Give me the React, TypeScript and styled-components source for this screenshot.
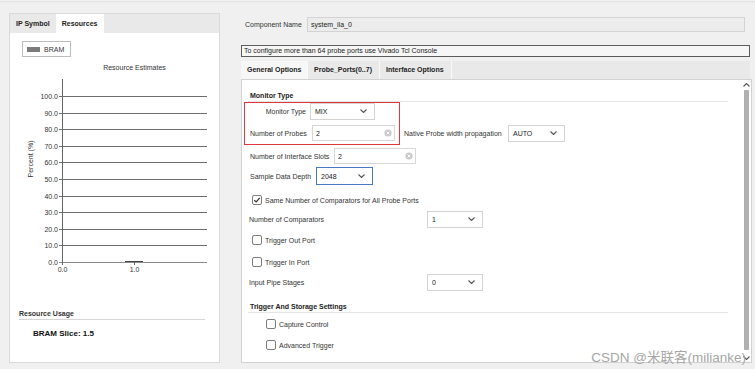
import React from 'react';
import styled, { createGlobalStyle } from 'styled-components';

const GlobalStyle = createGlobalStyle`
  html, body { margin: 0; padding: 0; background: #f0f0f0; }
  body { font-family: "Liberation Sans", Arial, sans-serif; font-size: 7px; color: #222; }
  * { box-sizing: border-box; }
`;

const Page = styled.div`
  position: relative;
  width: 755px;
  height: 368px;
  margin-top: 1px;
  border-top: 1px solid #e3e3e3;
  background: #f0f0f0;
  overflow: hidden;
  display: flex;
  align-items: flex-start;
  padding: 11px 0 0 9px;
  gap: 20px;
`;

/* ---------- left panel ---------- */
const LeftPanel = styled.div`
  width: 211px;
  height: 350px;
  background: #fff;
  border: 1px solid #d9d9d9;
  display: flex;
  flex-direction: column;
`;

const TabBar = styled.div<{ $w?: number }>`
  display: flex;
  height: 19px;
  flex-shrink: 0;
  background: #e9e9e9;
  ${(p) => (p.$w ? `width: ${p.$w}px;` : '')}
`;

const Tab = styled.div<{ $active?: boolean; $w?: number; $bg?: string }>`
  height: 100%;
  line-height: 19px;
  padding: 0 6px;
  font-weight: bold;
  color: #222;
  white-space: nowrap;
  background: ${(p) => (p.$active ? p.$bg || '#fff' : 'transparent')};
  ${(p) => (p.$w ? `width: ${p.$w}px;` : '')}
`;

const RightTab = styled(Tab)`
  line-height: 18px;
  border-right: 1px solid #f9f9f9;
`;

const Legend = styled.div`
  margin: 8px 0 0 12px;
  width: 49px;
  height: 16px;
  border: 1px solid #bcbcbc;
  display: flex;
  align-items: center;
  gap: 4px;
  padding-left: 4px;
  color: #333;
  flex-shrink: 0;
`;

const Swatch = styled.span`
  width: 13px;
  height: 5px;
  background: #7b7b7b;
`;

const ChartSvg = styled.svg`
  display: block;
  margin-top: 2px;
  flex-shrink: 0;
`;

const Usage = styled.div`
  margin-top: auto;
  padding: 0 0 23px 9px;
`;

const UsageTitle = styled.div`
  width: 186px;
  font-weight: bold;
  line-height: 9px;
  padding-bottom: 1px;
  border-bottom: 1px solid #d6d6d6;
  color: #333;
`;

const UsageValue = styled.div`
  margin: 9px 0 0 14px;
  font-size: 8px;
  line-height: 10px;
  font-weight: bold;
  color: #111;
`;

/* ---------- right column ---------- */
const RightCol = styled.div`
  width: 512px;
  height: 350px;
  display: flex;
  flex-direction: column;
`;

const NameRow = styled.div`
  margin-top: 4px;
  height: 15px;
  display: flex;
  align-items: center;
  padding-left: 5px;
  flex-shrink: 0;
`;

const NameInput = styled.div`
  width: 438px;
  height: 15px;
  background: #ececec;
  border: 1px solid #d3d3d3;
  padding-left: 3px;
  line-height: 13px;
`;

const InfoBar = styled.div`
  margin: 13px 0 0 1px;
  width: 509px;
  height: 12px;
  border: 1px solid #5c5c5c;
  background: #f6f6f6;
  padding-left: 2px;
  line-height: 10px;
  flex-shrink: 0;
`;

const RightTabs = styled(TabBar)`
  margin: 4px 0 0 1px;
  height: 18px;
`;

const Content = styled.div`
  margin-left: 1px;
  width: 511px;
  flex: 1;
  background: #fff;
  border: 1px solid #d2d2d2;
  display: flex;
`;

const Form = styled.div`
  position: relative;
  flex: 1;
  display: flex;
  flex-direction: column;
`;

const SectionHeading = styled.div`
  height: 22px;
  margin: 0 14px 0 6px;
  padding: 11px 0 0 2px;
  line-height: 9px;
  font-weight: bold;
  color: #222;
  border-bottom: 1px solid #e5e5e5;
  flex-shrink: 0;
`;

const Row = styled.div<{ $mt?: number; $pl?: number }>`
  height: 18px;
  margin-top: ${(p) => p.$mt ?? 0}px;
  padding-left: ${(p) => p.$pl ?? 8}px;
  display: flex;
  align-items: center;
  flex-shrink: 0;
`;

const Label = styled.span<{ $w?: number; $right?: boolean; $ml?: number }>`
  flex-shrink: 0;
  white-space: nowrap;
  color: #333;
  ${(p) => (p.$w ? `width: ${p.$w}px;` : '')}
  ${(p) => (p.$ml ? `margin-left: ${p.$ml}px;` : '')}
  text-align: ${(p) => (p.$right ? 'right' : 'left')};
  padding-right: ${(p) => (p.$right ? 4 : 0)}px;
`;

const SelectBox = styled.div<{ $w: number; $h?: number; $focus?: boolean }>`
  width: ${(p) => p.$w}px;
  height: ${(p) => p.$h ?? 17}px;
  border: 1px solid ${(p) => (p.$focus ? '#4a76c9' : '#d3d3d3')};
  background: #fff;
  display: flex;
  align-items: center;
  justify-content: space-between;
  padding: 0 7px 0 4px;
  flex-shrink: 0;
  color: #222;
`;

const InputBox = styled.div<{ $w: number }>`
  width: ${(p) => p.$w}px;
  height: 16px;
  border: 1px solid #d6d6d6;
  background: #fff;
  display: flex;
  align-items: center;
  justify-content: space-between;
  padding: 0 2px 0 3px;
  flex-shrink: 0;
`;

const CheckRow = styled(Row)`
  gap: 3px;
`;

const Box = styled.span`
  width: 10px;
  height: 10px;
  border: 1px solid #7d7d7d;
  border-radius: 2px;
  background: #fff;
  display: flex;
  align-items: center;
  justify-content: center;
  flex-shrink: 0;
`;

const Annotation = styled.div`
  position: absolute;
  left: 2px;
  top: 22px;
  width: 156px;
  height: 43px;
  border: 1.5px solid #e3363b;
  pointer-events: none;
`;

const Scrollbar = styled.div`
  width: 9px;
  display: flex;
  flex-direction: column;
  align-items: center;
  padding: 3px 0 2px;
`;

const Thumb = styled.div`
  flex: 1;
  width: 5px;
  margin: 3px 0 6px;
  background: #b0b0b0;
  border-radius: 1px;
`;

const Watermark = styled.div`
  position: absolute;
  right: 9px;
  bottom: 3px;
  z-index: 2;
  font-family: "Liberation Sans", "Noto Sans CJK SC", sans-serif;
  font-size: 13.5px;
  line-height: 16px;
  color: #a6a6a6;
  white-space: nowrap;
`;

/* ---------- icons ---------- */
const Chevron = ({ up }: { up?: boolean }) => (
  <svg width="7" height="4" viewBox="0 0 7 4">
    <polyline
      points={up ? '0.5,3.5 3.5,0.5 6.5,3.5' : '0.5,0.5 3.5,3.5 6.5,0.5'}
      fill="none"
      stroke="#555"
      strokeWidth="1.1"
    />
  </svg>
);

const ClearIcon = () => (
  <svg width="8" height="8" viewBox="0 0 8 8">
    <circle cx="4" cy="4" r="3.6" fill="#c9c9c9" />
    <path d="M2.6 2.6 L5.4 5.4 M5.4 2.6 L2.6 5.4" stroke="#fff" strokeWidth="0.9" />
  </svg>
);

const Tick = () => (
  <svg width="8" height="8" viewBox="0 0 8 8">
    <polyline points="1.3,4.2 3.2,6 6.8,1.8" fill="none" stroke="#333" strokeWidth="1.2" />
  </svg>
);

const Select = ({ value, w, h, focus }: { value: string; w: number; h?: number; focus?: boolean }) => (
  <SelectBox $w={w} $h={h} $focus={focus}>
    <span>{value}</span>
    <Chevron />
  </SelectBox>
);

const TextInput = ({ value, w }: { value: string; w: number }) => (
  <InputBox $w={w}>
    <span>{value}</span>
    <ClearIcon />
  </InputBox>
);

const Check = ({ label, checked, mt, pl }: { label: string; checked?: boolean; mt?: number; pl?: number }) => (
  <CheckRow $mt={mt} $pl={pl}>
    <Box>{checked && <Tick />}</Box>
    <Label>{label}</Label>
  </CheckRow>
);

/* ---------- chart ---------- */
const ticks = [100, 90, 80, 70, 60, 50, 40, 30, 20, 10, 0];
const FONT = 'Liberation Sans, Arial, sans-serif';

const Chart = () => {
  const top = 37;
  const step = 16.6;
  return (
    <ChartSvg width="209" height="218" viewBox="0 0 209 218">
      <text x="124.5" y="10.5" textAnchor="middle" fontSize="7" fill="#333" fontFamily={FONT}>
        Resource Estimates
      </text>
      <line x1="52.5" y1="20" x2="52.5" y2="203" stroke="#666" strokeWidth="1" />
      {ticks.map((t, i) => {
        const y = Math.round(top + i * step) + 0.5;
        return (
          <g key={t}>
            <line x1="49" y1={y} x2="197" y2={y} stroke={t === 0 ? '#8a8a8a' : '#6e6e6e'} strokeWidth="1" />
            <text x="48" y={y + 2.5} textAnchor="end" fontSize="7" fill="#333" fontFamily={FONT}>
              {t.toFixed(1)}
            </text>
          </g>
        );
      })}
      <line x1="52.5" y1="203" x2="52.5" y2="206" stroke="#666" />
      <line x1="124.5" y1="203" x2="124.5" y2="206" stroke="#666" />
      <line x1="115" y1="202.5" x2="133" y2="202.5" stroke="#444" strokeWidth="1" />
      <text x="52.5" y="212.5" textAnchor="middle" fontSize="7" fill="#333" fontFamily={FONT}>
        0.0
      </text>
      <text x="124.5" y="212.5" textAnchor="middle" fontSize="7" fill="#333" fontFamily={FONT}>
        1.0
      </text>
      <text x="0" y="0" transform="translate(22.5 100) rotate(-90)" textAnchor="middle" fontSize="7" fill="#333" fontFamily={FONT}>
        Percent (%)
      </text>
    </ChartSvg>
  );
};

export default function App() {
  return (
    <>
      <GlobalStyle />
      <Page>
        <LeftPanel>
          <TabBar>
            <Tab>IP Symbol</Tab>
            <Tab $active>Resources</Tab>
          </TabBar>
          <Legend>
            <Swatch />
            <span>BRAM</span>
          </Legend>
          <Chart />
          <Usage>
            <UsageTitle>Resource Usage</UsageTitle>
            <UsageValue>BRAM Slice: 1.5</UsageValue>
          </Usage>
        </LeftPanel>

        <RightCol>
          <NameRow>
            <Label $w={62}>Component Name</Label>
            <NameInput>system_ila_0</NameInput>
          </NameRow>
          <InfoBar>To configure more than 64 probe ports use Vivado Tcl Console</InfoBar>
          <RightTabs $w={509}>
            <RightTab $active $bg="#f7f7f7" $w={67}>
              General Options
            </RightTab>
            <RightTab $w={72}>Probe_Ports(0..7)</RightTab>
            <RightTab $w={72}>Interface Options</RightTab>
          </RightTabs>
          <Content>
            <Form>
              <SectionHeading>Monitor Type</SectionHeading>
              <Row $mt={0}>
                <Label $w={60} $right>
                  Monitor Type
                </Label>
                <Select value="MIX" w={65} />
              </Row>
              <Row $mt={4}>
                <Label $w={62}>Number of Probes</Label>
                <TextInput value="2" w={83} />
                <Label $w={104} $ml={9}>
                  Native Probe width propagation
                </Label>
                <Select value="AUTO" w={57} />
              </Row>
              <Row $mt={5}>
                <Label $w={84}>Number of Interface Slots</Label>
                <TextInput value="2" w={82} />
              </Row>
              <Row $mt={2}>
                <Label $w={66}>Sample Data Depth</Label>
                <Select value="2048" w={57} h={18} focus />
              </Row>
              <Check mt={6} pl={10} checked label="Same Number of Comparators for All Probe Ports" />
              <Row $mt={1} $pl={7}>
                <Label $w={178}>Number of Comparators</Label>
                <Select value="1" w={56} />
              </Row>
              <Check mt={3} pl={10} label="Trigger Out Port" />
              <Check mt={4} pl={10} label="Trigger In Port" />
              <Row $mt={2} $pl={7}>
                <Label $w={178}>Input Pipe Stages</Label>
                <Select value="0" w={56} />
              </Row>
              <SectionHeading>Trigger And Storage Settings</SectionHeading>
              <Check mt={2} pl={24} label="Capture Control" />
              <Check mt={3} pl={24} label="Advanced Trigger" />
              <Annotation />
            </Form>
            <Scrollbar>
              <Chevron up />
              <Thumb />
              <Chevron />
            </Scrollbar>
          </Content>
        </RightCol>
        <Watermark>CSDN @米联客(milianke)</Watermark>
      </Page>
    </>
  );
}
